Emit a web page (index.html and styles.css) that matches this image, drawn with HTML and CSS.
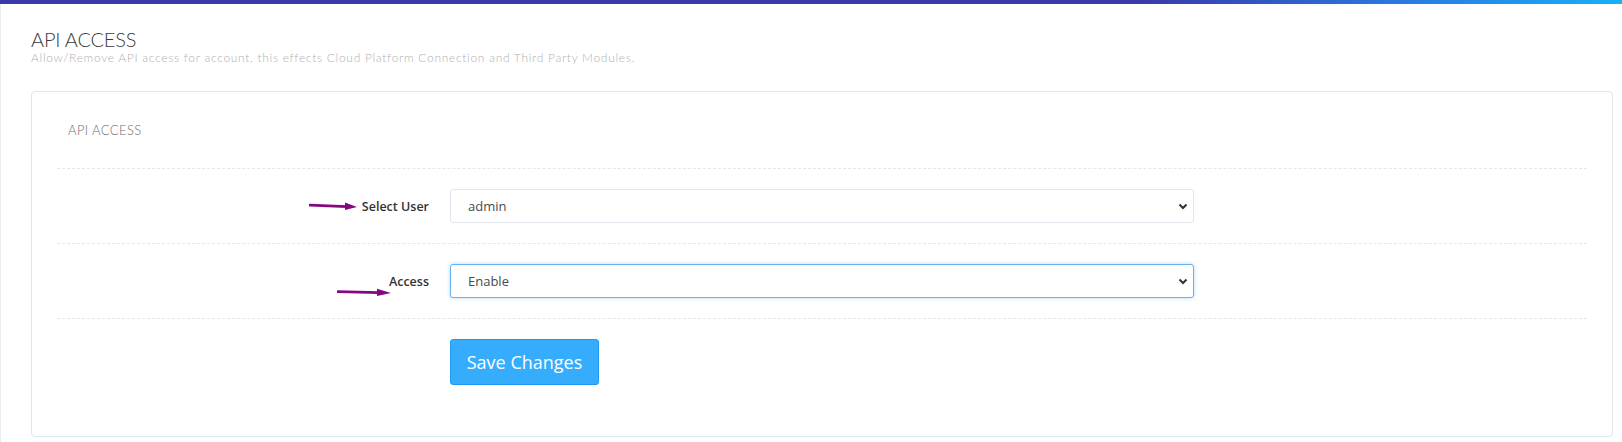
FILE: index.html
```html
<!DOCTYPE html>
<html lang="en">
<head>
    <meta charset="UTF-8">
    <meta name="viewport" content="width=device-width, initial-scale=1.0">
    <title>API Access</title>
    <link rel="stylesheet" href="styles.css">
</head>
<body>

<div class="top-bar"></div>

<div class="page">
    <div class="page-header">
        <h1>API ACCESS</h1>
        <p>Allow/Remove API access for account, this effects Cloud Platform Connection and Third Party Modules.</p>
    </div>

    <div class="card">
        <div class="card-title">API ACCESS</div>

        <form class="form">
            <div class="form-row">
                <label class="form-label" for="user">
                    <svg class="arrow arrow-user" width="50" height="10" viewBox="0 0 50 10">
                        <path d="M1 4.2 L38 5.6" stroke="#85087f" stroke-width="2.8" stroke-linecap="round"/>
                        <path d="M36 1.5 L48 6 L36 9 Z" fill="#85087f"/>
                    </svg>
                    Select User
                </label>
                <div class="select-wrap">
                    <select id="user" class="select">
                        <option>admin</option>
                    </select>
                    <svg class="chevron" width="10" height="7" viewBox="0 0 10 7">
                        <path d="M1.5 1.5 L5 5 L8.5 1.5" fill="none" stroke="#333" stroke-width="2"/>
                    </svg>
                </div>
            </div>

            <div class="form-row">
                <label class="form-label" for="access">
                    <svg class="arrow arrow-access" width="56" height="10" viewBox="0 0 56 10">
                        <path d="M1 4.6 L42 5.6" stroke="#85087f" stroke-width="2.8" stroke-linecap="round"/>
                        <path d="M40 1.8 L54 6 L40 9 Z" fill="#85087f"/>
                    </svg>
                    Access
                </label>
                <div class="select-wrap">
                    <select id="access" class="select select-focus">
                        <option>Enable</option>
                        <option>Disable</option>
                    </select>
                    <svg class="chevron" width="10" height="7" viewBox="0 0 10 7">
                        <path d="M1.5 1.5 L5 5 L8.5 1.5" fill="none" stroke="#333" stroke-width="2"/>
                    </svg>
                </div>
            </div>

            <div class="form-actions">
                <button type="button" class="btn-save">Save Changes</button>
            </div>
        </form>
    </div>
</div>

</body>
</html>
```

FILE: styles.css
```css
body {
    margin: 0;
    background-color: #fff;
    font-family: 'Open Sans', 'Noto Sans', sans-serif;
    color: #333;
}
.top-bar {
    height: 4px;
    background: linear-gradient(90deg, #3b38a9 0%, #3b38a9 70%, #2a78de 86%, #17b0f8 100%);
}
.page {
    border-left: 1px solid #e9ecf1;
    padding: 0 9px 0 30px;
    min-height: 438px;
}
.page-header {
    padding-top: 23px;
    height: 64px;
}
.page-header h1 {
    margin: 0;
    font-family: Lato, 'Open Sans', sans-serif;
    font-weight: 300;
    font-size: 20px;
    line-height: 24px;
    color: #3a3a3a;
    letter-spacing: -0.2px;
}
.page-header p {
    margin: 0;
    font-family: Lato, 'Open Sans', sans-serif;
    font-weight: 300;
    font-size: 12px;
    line-height: 14px;
    letter-spacing: 0.7px;
    color: #b0b0b0;
}
/* main panel */
.card {
    border: 1px solid #dfe6ec;
    border-radius: 4px;
    padding: 0 25px 51px 25px;
}
.card-title {
    padding: 30px 11px 30px;
    font-family: Lato, 'Open Sans', sans-serif;
    font-weight: 300;
    font-size: 13px;
    line-height: 16px;
    letter-spacing: 0.4px;
    color: #6f6f6f;
    border-bottom: 1px dashed #e2e8ee;
}
.form-row {
    display: grid;
    grid-template-columns: 372px 744px;
    column-gap: 21px;
    align-items: center;
    padding: 20px 0;
    border-bottom: 1px dashed #e2e8ee;
}
.form-label {
    position: relative;
    text-align: right;
    font-size: 12.5px;
    font-weight: 600;
    color: #333;
}
.arrow {
    position: absolute;
    top: 50%;
}
.arrow-user {
    right: 70px;
    margin-top: -5px;
}
.arrow-access {
    right: 36px;
    margin-top: 6px;
}
.select-wrap {
    position: relative;
}
.select {
    display: block;
    width: 100%;
    height: 34px;
    padding: 0 17px;
    border: 1px solid #e1e6ee;
    border-radius: 3px;
    background-color: #fff;
    font-family: 'Open Sans', 'Noto Sans', sans-serif;
    font-size: 13px;
    color: #4a4a4a;
    appearance: none;
    -webkit-appearance: none;
    box-sizing: border-box;
    outline: none;
}
.select-focus {
    border-color: #66b3f0;
    box-shadow: 0 0 4px rgba(102, 175, 233, 0.45);
}
.chevron {
    position: absolute;
    right: 6px;
    top: 14px;
    pointer-events: none;
}
.form-actions {
    padding: 20px 0 0 393px;
}
.btn-save {
    width: 149px;
    height: 46px;
    border: 1px solid #1e9bf0;
    border-radius: 3px;
    background-color: #36acfd;
    color: #fff;
    font-family: 'Open Sans', 'Noto Sans', sans-serif;
    font-size: 18px;
    cursor: pointer;
}
```
